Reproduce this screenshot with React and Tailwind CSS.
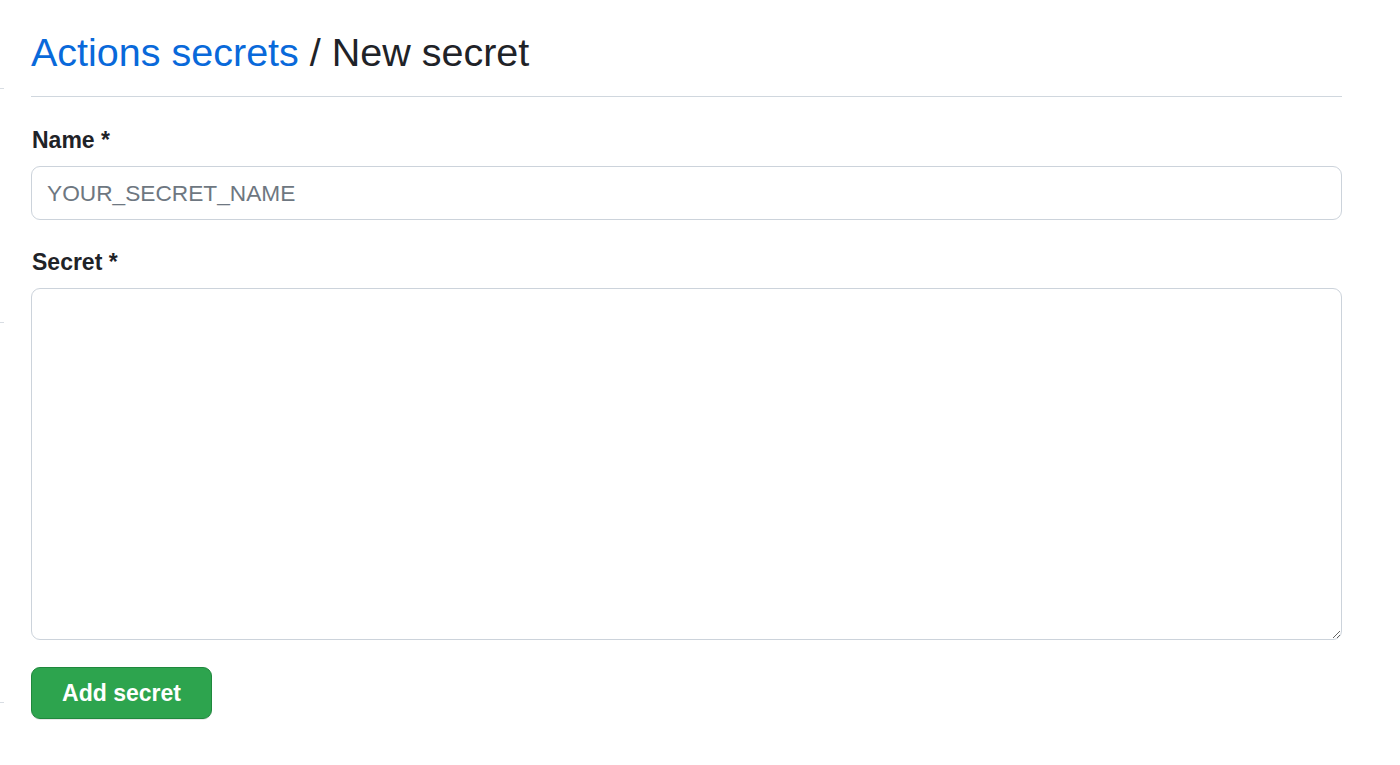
import { useState } from 'react';

function Field({ label, children }) {
  return (
    <div className="flex flex-col gap-[11px]">
      <label className="pl-px text-[23px] leading-[30px] font-bold">{label}</label>
      {children}
    </div>
  );
}

export default function App() {
  const [name, setName] = useState('');
  const [secret, setSecret] = useState('');

  return (
    <div className="relative min-h-[765px] w-[1400px] bg-white font-['Liberation_Sans',Arial,sans-serif] text-[#1f2328]">
      {/* faint ticks at the left edge of the crop */}
      <span className="absolute left-0 top-[88px] h-px w-[4px] bg-[#d8dde3]" />
      <span className="absolute left-0 top-[322px] h-px w-[4px] bg-[#d8dde3]" />
      <span className="absolute left-0 top-[702px] h-px w-[4px] bg-[#d8dde3]" />

      <div className="flex w-[1342px] flex-col pl-[31px] pt-[27px]">
        {/* Header */}
        <div className="border-b border-[#d0d7de] pb-[19px]">
          <h1 className="text-[39.5px] leading-[50px] font-normal">
            <a href="#" className="text-[#0969da]">Actions secrets</a>
            <span> / New secret</span>
          </h1>
        </div>

        <form className="flex flex-col gap-[27px] pt-[28px]" onSubmit={(e) => e.preventDefault()}>
          <Field label="Name *">
            <input
              value={name}
              onChange={(e) => setName(e.target.value)}
              placeholder="YOUR_SECRET_NAME"
              className="h-[54px] w-full rounded-[9px] border border-[#ccd3db] bg-white px-[15px] text-[22.7px] text-[#1f2328] placeholder:text-[#6e7781] focus:outline-none"
            />
          </Field>

          <Field label="Secret *">
            <textarea
              value={secret}
              onChange={(e) => setSecret(e.target.value)}
              className="block h-[352px] w-full resize-y rounded-[9px] border border-[#ccd3db] bg-white px-[15px] py-[12px] text-[22px] focus:outline-none"
            />
          </Field>

          <div className="flex">
            <button
              type="submit"
              className="flex h-[52px] w-[181px] items-center justify-center rounded-[9px] border border-[#1f883d] bg-[#2da44e] text-[23px] font-bold text-white shadow-[0_1px_0_rgba(27,31,36,0.1)]"
            >
              Add secret
            </button>
          </div>
        </form>
      </div>
    </div>
  );
}
